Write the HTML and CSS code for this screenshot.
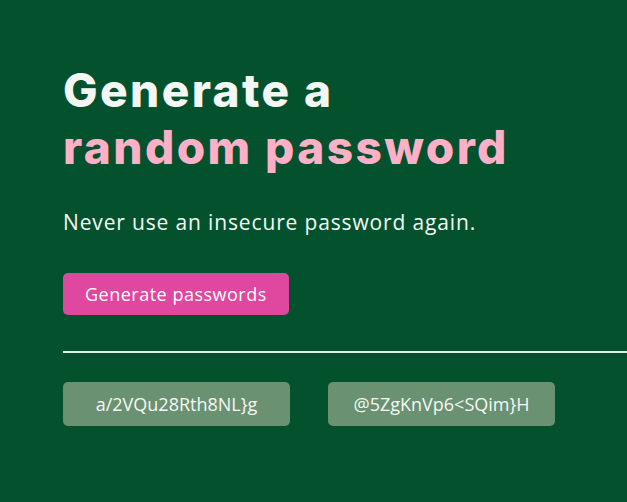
FILE: index.html
```html
<!DOCTYPE html>
<html lang="en">
<head>
    <meta charset="UTF-8">
    <meta name="viewport" content="width=device-width, initial-scale=1.0">
    <title>Password Generator</title>
    <link rel="stylesheet" href="styles.css">
</head>
<body>
    <div class="container">
        <h1 class="title">Generate a <span class="accent">random password</span></h1>
        <p class="subtitle">Never use an insecure password again.</p>
        <button class="generate-btn">Generate passwords</button>
        <hr class="divider">
        <div class="passwords">
            <div class="password">a/2VQu28Rth8NL}g</div>
            <div class="password">@5ZgKnVp6&lt;SQim}H</div>
        </div>
    </div>
</body>
</html>
```

FILE: styles.css
```css
body {
    margin: 0;
    background-color: #04512e;
    font-family: "Open Sans", sans-serif;
    color: #f4f6f4;
    overflow: hidden;
}

.container {
    padding: 62px 0 0 63px;
}

.title {
    margin: 0;
    font-family: Inter, sans-serif;
    font-size: 46px;
    font-weight: 800;
    line-height: 57px;
    letter-spacing: 2.4px;
    color: #f4f6f4;
}

.accent {
    display: block;
    color: #ffafc6;
}

.subtitle {
    margin: 32px 0 0;
    font-size: 21px;
    line-height: 28px;
    letter-spacing: 0.85px;
    color: #f0faf4;
}

.generate-btn {
    margin-top: 37px;
    height: 42px;
    padding: 0 22px;
    font-family: "Open Sans", sans-serif;
    font-size: 18px;
    letter-spacing: 0.5px;
    color: #fff;
    background-color: #e0479e;
    border: none;
    border-radius: 5px;
    cursor: pointer;
}

.divider {
    margin: 36px 0 0;
    border: none;
    border-top: 2px solid #d8f3e4;
}

.passwords {
    display: flex;
    gap: 38px;
    margin-top: 29px;
}

.password {
    width: 227px;
    height: 44px;
    display: flex;
    align-items: center;
    justify-content: center;
    font-size: 18px;
    background-color: #6a9172;
    border-radius: 5px;
    color: #f4f8f4;
}
```
